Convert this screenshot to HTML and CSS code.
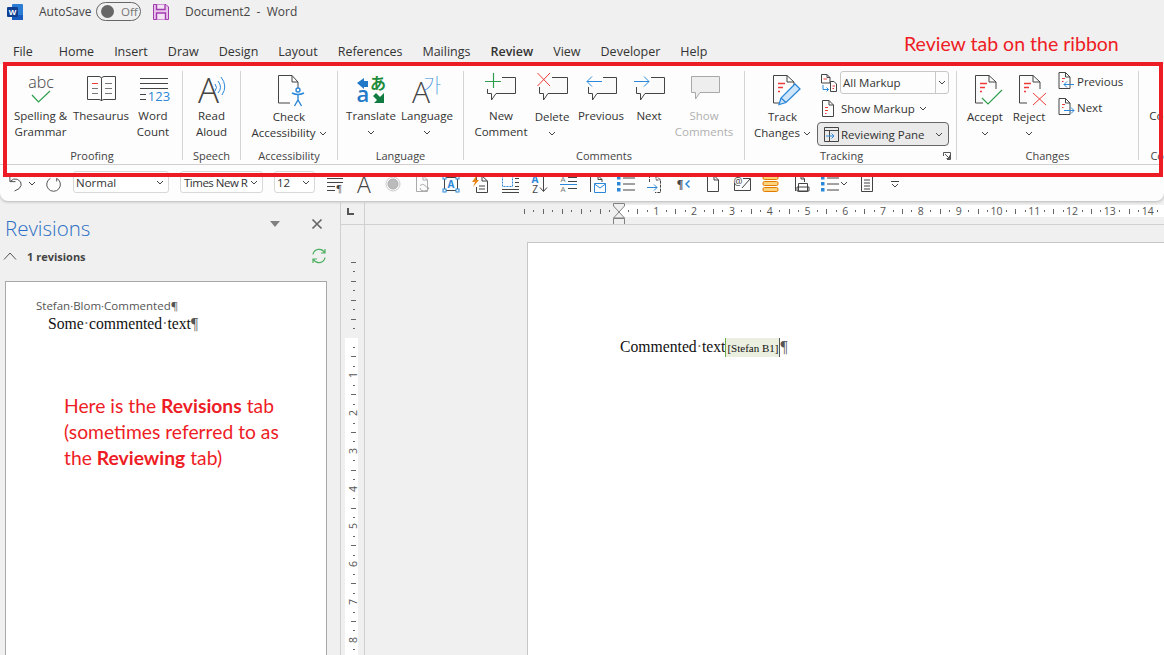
FILE: index.html
```html
<!DOCTYPE html>
<html lang="en">
<head>
  <meta charset="UTF-8" />
  <title>Document2 - Word</title>
  <link rel="stylesheet" href="styles.css">
</head>
<body>

<!-- shared icon parts -->
<svg class="defs">
  <symbol id="chev" viewBox="0 0 8 5"><path d="M1 1l3 3 3-3" fill="none" stroke="#444" stroke-width="1"/></symbol>
  <symbol id="bubble" viewBox="0 0 32 32" overflow="visible"><path d="M2.5 2.5H30.5V18.5H11L6.5 25V18.5H2.5Z"/></symbol>
  <symbol id="sheet" viewBox="0 0 32 32"><path d="M6.5 .5H20L27 7V14M20 .5V7H27M6.5 .5V28H14"/></symbol>
  <symbol id="smalldoc" viewBox="0 0 18 18"><path d="M3.5 .5H10L14.5 5V16.5H3.5ZM10 .5V5H14.5"/></symbol>
</svg>

<header class="titlebar">
  <svg class="word-logo" viewBox="0 0 16 16"><rect x="5" width="11" height="16" rx="1" fill="#2b7cd3"/><rect x="5" y="11" width="11" height="5" fill="#185abd"/><rect y="3" width="11" height="10" rx="1" fill="#103f91"/><text x="5.5" y="11" text-anchor="middle" class="word-w">W</text></svg>
  <span class="autosave">AutoSave</span>
  <div class="toggle"><i class="knob"></i><span>Off</span></div>
  <svg class="save" viewBox="0 0 16 16"><path d="M.5 .5H13L15.5 3V15.5H.5Z" fill="#e9c6ec" stroke="#a33bb0"/><path d="M3.5 .5V5.5H12V.5M3.5 15.5V9H12.5V15.5" fill="#f3e3f4" stroke="#a33bb0" stroke-width="1.4"/></svg>
  <span class="doc-name">Document2&nbsp; - &nbsp;Word</span>
</header>

<nav class="tabs">
  <a class="tab-file">File</a><a>Home</a><a>Insert</a><a>Draw</a><a>Design</a><a>Layout</a><a>References</a><a>Mailings</a><a class="active">Review</a><a>View</a><a>Developer</a><a>Help</a>
</nav>

<section class="ribbon">
  <div class="groups">

    <div class="group g-proofing">
      <div class="btns">
        <div class="btn w61">
          <svg class="ic" viewBox="0 0 32 32"><text x="16" y="13" text-anchor="middle" class="svg-abc">abc</text><path class="green" d="M7 20l6.5 7L25 16"/></svg>
          <span>Spelling &amp;<br>Grammar</span>
        </div>
        <div class="btn w60">
          <svg class="ic" viewBox="0 0 32 32"><path d="M2.5 1.5H14Q16 1.5 16.5 3.5Q17 1.5 19 1.5H30.5V24.5H19Q17 24.5 16.5 26Q16 24.5 14 24.5H2.5ZM16.5 3.5V26"/><path class="red" d="M7 8.5H13"/><path d="M7 13.5H13M7 18.5H13M20 8.5H27M20 13.5H27M20 18.5H27" stroke="#777"/></svg>
          <span>Thesaurus</span>
        </div>
        <div class="btn w44">
          <svg class="ic" viewBox="0 0 32 32"><path d="M3 3.5H31M3 8.5H31M3 13.5H31M3 19.5H9M3 24.5H9"/><text x="22" y="26" text-anchor="middle" class="svg-num">123</text></svg>
          <span>Word<br>Count</span>
        </div>
      </div>
      <div class="label">Proofing</div>
    </div>

    <div class="group g-speech">
      <div class="btns">
        <div class="btn w57">
          <svg class="ic" viewBox="0 0 32 32"><text x="12.5" y="28" text-anchor="middle" class="svg-bigA">A</text><path class="blue" d="M19 9Q22 12.5 19 16M22 6Q27 12.5 22 18M25 2Q32 11 26 20"/></svg>
          <span>Read<br>Aloud</span>
        </div>
      </div>
      <div class="label">Speech</div>
    </div>

    <div class="group g-access">
      <div class="btns">
        <div class="btn w96 low">
          <svg class="ic" viewBox="0 0 32 32"><path d="M5.5 .5H19L25 7V13M19 .5V7H25M5.5 .5V28H17"/><g class="person"><circle cx="25" cy="15" r="2"/><path d="M19 18Q25 21 31 18M25 20V25M21.5 31L25 25L28.5 31"/></g></svg>
          <span>Check<br>Accessibility <svg class="chev"><use href="#chev"/></svg></span>
        </div>
      </div>
      <div class="label">Accessibility</div>
    </div>

    <div class="group g-language">
      <div class="btns">
        <div class="btn w56">
          <svg class="ic" viewBox="0 0 32 32"><path d="M2 8L9 3V6H13V12H9V14Z" fill="#1f78c8" stroke="none"/><text x="23" y="14" text-anchor="middle" class="svg-kana">あ</text><text x="8" y="27" text-anchor="middle" class="svg-a">a</text><path d="M29 18V28H19L22 25L18 21L21 18L25 22Z" fill="#107c41" stroke="none"/></svg>
          <span>Translate<br><svg class="chev"><use href="#chev"/></svg></span>
        </div>
        <div class="btn w56">
          <svg class="ic" viewBox="0 0 32 32"><text x="10" y="28" text-anchor="middle" class="svg-midA">A</text><text x="21" y="18" text-anchor="middle" class="svg-ko">가</text></svg>
          <span>Language<br><svg class="chev"><use href="#chev"/></svg></span>
        </div>
      </div>
      <div class="label">Language</div>
    </div>

    <div class="group g-comments">
      <div class="btns">
        <div class="btn w54">
          <svg class="ic" viewBox="0 0 32 32"><use href="#bubble"/><rect x="-1" y="-3" width="18" height="17" class="mask"/><path class="green" d="M0 6.5H16M8.5 -2V13"/></svg>
          <span>New<br>Comment</span>
        </div>
        <div class="btn w48 low">
          <svg class="ic" viewBox="0 0 32 32"><use href="#bubble" x="1"/><rect x="0" y="-3" width="16" height="15" class="mask"/><path class="red" d="M1.5 -2L14 11M14 -2L1.5 11"/></svg>
          <span>Delete<br><svg class="chev"><use href="#chev"/></svg></span>
        </div>
        <div class="btn w50">
          <svg class="ic" viewBox="0 0 32 32"><use href="#bubble" x="1"/><rect x="0" y="0" width="18" height="12" class="mask"/><path class="blue" d="M17 6.5H2M7 1.5L2 6.5L7 11.5"/></svg>
          <span>Previous</span>
        </div>
        <div class="btn w46">
          <svg class="ic" viewBox="0 0 32 32"><use href="#bubble" x="1"/><rect x="0" y="0" width="18" height="12" class="mask"/><path class="blue" d="M1 6.5H16M11 1.5L16 6.5L11 11.5"/></svg>
          <span>Next</span>
        </div>
        <div class="btn w64 off">
          <svg class="ic ic-off" viewBox="0 0 32 32"><use href="#bubble" x="1" y="-1"/></svg>
          <span>Show<br>Comments</span>
        </div>
      </div>
      <div class="label">Comments</div>
    </div>

    <div class="group g-tracking">
      <div class="btns">
        <div class="btn w71 low">
          <svg class="ic" viewBox="0 0 32 32"><use href="#sheet"/><path class="red dash" d="M11 8.5H18M11 12.5H16M11 16.5H13"/><path class="blue pen" d="M12 29.5L14 23L28 9L33 14L19 27.5ZM14 23L19 27.5" fill="#cfe6fa"/></svg>
          <span>Track<br>Changes <svg class="chev"><use href="#chev"/></svg></span>
        </div>
        <div class="track-col">
          <div class="markup-row">
            <svg class="ic16" viewBox="0 0 18 18"><path d="M1.5 .5H7L10 3.5V9H1.5ZM7 .5V3.5H10M10.5 7.5H14L16.5 10V17.5H10.5Z"/><path class="red" d="M3.5 5H7M12.5 12H15M12.5 14.5H14"/><path class="blue" d="M3 11V15.5H8.5M6.5 13.5L8.5 15.5L6.5 17.5"/></svg>
            <div class="combo"><span>All Markup</span><i class="combo-btn"><svg class="chev"><use href="#chev"/></svg></i></div>
          </div>
          <div class="show-row">
            <svg class="ic16" viewBox="0 0 18 18"><use href="#smalldoc" x="-3"/><path class="red" d="M3 7.5H6M3 10.5H6M3 13.5H4.5"/></svg>
            <span>Show Markup</span> <svg class="chev"><use href="#chev"/></svg>
          </div>
          <div class="pane-row">
            <svg class="ic16" viewBox="0 0 18 18"><path d="M2.5 2.5H16.5V16.5H2.5ZM2.5 5.5H16.5M7.5 5.5V16.5"/><path class="blue" d="M4 11H12M9.5 8.5L12 11L9.5 13.5"/></svg>
            <span>Reviewing Pane</span>
            <svg class="chev"><use href="#chev"/></svg>
          </div>
        </div>
      </div>
      <div class="label">Tracking</div>
      <svg class="launcher" viewBox="0 0 8 8"><path d="M.5 4V.5H7.5V7.5H4M2 2L6.5 6.5M6.5 3.5V6.5H3.5" fill="none" stroke="#555"/></svg>
    </div>

    <div class="group g-changes">
      <div class="btns">
        <div class="btn w44 low">
          <svg class="ic" viewBox="0 0 32 32"><use href="#sheet"/><path class="red dash" d="M11 8.5H18M11 12.5H16M11 16.5H13"/><path class="green" d="M13 23L19 29L33 15"/></svg>
          <span>Accept<br><svg class="chev"><use href="#chev"/></svg></span>
        </div>
        <div class="btn w44 low">
          <svg class="ic" viewBox="0 0 32 32"><use href="#sheet"/><path class="red dash" d="M11 8.5H18M11 12.5H16M11 16.5H13"/><path class="red" d="M20 18L33 30M33 18L20 30"/></svg>
          <span>Reject<br><svg class="chev"><use href="#chev"/></svg></span>
        </div>
        <div class="nav-col">
          <div class="nav-row">
            <svg class="ic16" viewBox="0 0 18 18"><use href="#smalldoc" x="-2.5"/><path class="red" d="M4 6.5H7M4 9.5H5.5"/><path class="blue" d="M16 12.5H6M9 9.5L6 12.5L9 15.5"/></svg>
            <span>Previous</span>
          </div>
          <div class="nav-row">
            <svg class="ic16" viewBox="0 0 18 18"><use href="#smalldoc" x="-2.5"/><path class="red" d="M4 6.5H7M4 9.5H5.5"/><path class="blue" d="M6 12.5H16M13 9.5L16 12.5L13 15.5"/></svg>
            <span>Next</span>
          </div>
        </div>
      </div>
      <div class="label">Changes</div>
    </div>

    <div class="group g-compare">
      <div class="btns">
        <div class="btn w70"><i class="ic"></i><span>Compare</span></div>
      </div>
      <div class="label">Compare</div>
    </div>
  </div>

  <div class="qat">
    <svg class="undo" viewBox="0 0 16 18"><path d="M2 1V7H8M2.5 6.5Q6 3 10 4.5Q15 7 14 11Q13 15 7 17"/></svg>
    <svg class="chev qat-chev"><use href="#chev"/></svg>
    <svg class="redo" viewBox="0 0 18 18"><path d="M12 1.5A7.7 7.7 0 1 1 5 1.5M12 1.5V5"/></svg>
    <div class="qcombo q-style"><span>Normal</span><svg class="chev"><use href="#chev"/></svg></div>
    <div class="qcombo q-font"><span>Times New R</span><svg class="chev"><use href="#chev"/></svg></div>
    <div class="qcombo q-size"><span>12</span><svg class="chev"><use href="#chev"/></svg></div>
    <div class="qicons">
      <svg viewBox="0 0 18 18"><path d="M1 3.5H17M1 7.5H17M1 11.5H9M1 15.5H9"/><text x="13" y="17" text-anchor="middle" class="svg-para">¶</text></svg>
      <svg viewBox="0 0 18 18"><text x="9" y="18" text-anchor="middle" class="svg-qA">A</text></svg>
      <svg viewBox="0 0 18 18"><circle cx="9" cy="9" r="7" stroke="#ccc"/><circle cx="9" cy="9" r="5" fill="#bbb" stroke="#aaa"/></svg>
      <svg viewBox="0 0 18 18"><g stroke="#aaa"><use href="#smalldoc"/><path d="M7 10.5Q10 8 12 10.5T16 13Q15 16 11 16T7 13"/></g></svg>
      <svg viewBox="0 0 18 18"><rect x="2.5" y="2.5" width="13" height="13"/><text x="9" y="13" text-anchor="middle" class="svg-blueA">A</text><g class="handle"><rect x="1" y="1" width="3" height="3"/><rect x="14" y="1" width="3" height="3"/><rect x="1" y="14" width="3" height="3"/><rect x="14" y="14" width="3" height="3"/></g></svg>
      <svg viewBox="0 0 18 18"><path d="M5.5 6V1H11L16.5 6V17.5H5.5V12M11 1V6H16.5M8 11H14M8 14H14"/><path d="M6 0L1 7H4L2 12L8 5H5Z" fill="#e8861a" stroke="none"/></svg>
      <svg viewBox="0 0 18 18"><rect class="blue-dash" x="1.5" y="1.5" width="10" height="10"/><path d="M14 3.5H18M14 7.5H18M14 11.5H18M1 14.5H18M1 17.5H18"/></svg>
      <svg viewBox="0 0 18 18"><text x="5" y="8" text-anchor="middle" class="svg-azA">A</text><text x="5" y="18" text-anchor="middle" class="svg-azZ">Z</text><path d="M13.5 1V16M10 12.5L13.5 16.5L17 12.5"/></svg>
      <svg viewBox="0 0 18 18"><text x="4" y="7" text-anchor="middle" class="svg-smallA">A</text><text x="4" y="17" text-anchor="middle" class="svg-smallA">A</text><path d="M9 2.5H18M9 6.5H18M9 13.5H18"/><path class="blue" d="M1 9.5H18"/></svg>
      <svg viewBox="0 0 18 18"><path d="M2.5 17V.5H10L14 4.5V7M10 .5V4.5H14"/><path class="blue" d="M6.5 8.5H17.5V17.5H6.5ZM6.5 9L12 13L17.5 9"/></svg>
      <svg viewBox="0 0 18 18"><rect class="bullet" x="0" y="1" width="3.5" height="3.5"/><rect class="bullet" x="0" y="7" width="3.5" height="3.5"/><rect class="bullet" x="0" y="13" width="3.5" height="3.5"/><path d="M6 3H18M6 9H18M6 15H18"/></svg>
      <svg viewBox="0 0 18 18"><path d="M3.5 7V.5H10L14.5 5V17.5H9M10 .5V5H14.5" stroke-dasharray="3 1"/><path class="blue" d="M1 12.5H11M8 9.5L11 12.5L8 15.5"/></svg>
      <svg viewBox="0 0 18 18"><text x="5" y="13" text-anchor="middle" class="svg-pil">¶</text><path class="blue" stroke-width="1.5" d="M14.5 5.5L11 9L14.5 12.5"/></svg>
      <svg viewBox="0 0 18 18"><use href="#smalldoc"/></svg>
      <svg viewBox="0 0 18 18"><path d="M1.5 8V15.5H17.5V3.5H10M9 13L17 4"/><text x="5" y="10" text-anchor="middle" class="svg-at">@</text></svg>
      <svg viewBox="0 0 18 18" class="bars"><rect x="1" y="0.5" width="15" height="4" rx="1.5"/><rect x="1" y="6.5" width="15" height="4" rx="1.5"/><rect x="1" y="12.5" width="15" height="4" rx="1.5"/></svg>
      <svg viewBox="0 0 18 18"><path d="M3.5 16V.5H9L12.5 4V7M9 .5V4H12.5M6.5 8.5H15.5V16.5H6.5ZM5 12H17V16H5Z"/></svg>
      <svg viewBox="0 0 18 18"><rect class="bullet" x="0" y="1" width="3.5" height="3.5"/><rect class="bullet" x="0" y="7" width="3.5" height="3.5"/><rect class="bullet" x="0" y="13" width="3.5" height="3.5"/><path d="M6 3H18M6 9H18M6 15H18"/></svg>
    </div>
    <svg class="chev q-list-chev"><use href="#chev"/></svg>
    <svg class="q-lines" viewBox="0 0 14 18"><path d="M1.5 1.5H12.5V16.5H1.5ZM4 5H10M4 8H10M4 11H10M4 14H10"/></svg>
    <svg class="q-more" viewBox="0 0 10 8"><path d="M1 1.5H9M2 4L5 7L8 4"/></svg>
  </div>
</section>

<main class="workspace">
  <aside class="pane">
    <div class="pane-head">
      <h2>Revisions</h2>
      <i class="pane-arrow"></i>
      <svg class="pane-x" viewBox="0 0 12 12"><path d="M1.5 1.5L10.5 10.5M10.5 1.5L1.5 10.5"/></svg>
    </div>
    <div class="pane-count">
      <svg class="pane-up" viewBox="0 0 14 8"><path d="M1 7.5L7 1L13 7.5"/></svg>
      <b>1 revisions</b>
      <svg class="pane-sync" viewBox="0 0 16 16"><path d="M2 6.5A6.2 6.2 0 0 1 13.5 4.5M14 1V5H10M14 9.5A6.2 6.2 0 0 1 2.5 11.5M2 15V11H6"/></svg>
    </div>
    <div class="rev-card">
      <p class="rev-who">Stefan·Blom·Commented¶</p>
      <p class="rev-text">Some<i>·</i>commented<i>·</i>text<u>¶</u></p>
      <p class="note">Here is the <b>Revisions</b> tab<br>(sometimes referred to as<br>the <b>Reviewing</b> tab)</p>
    </div>
  </aside>

  <div class="doc-area">
    <div class="corner"><i></i></div>
    <div class="hruler">
      <div class="htrack">
        <div class="inch"></div><div class="inch"></div><div class="inch"></div>
        <div class="inch num">1</div><div class="inch num">2</div><div class="inch num">3</div><div class="inch num">4</div><div class="inch num">5</div><div class="inch num">6</div><div class="inch num">7</div><div class="inch num">8</div><div class="inch num">9</div><div class="inch num">10</div><div class="inch num">11</div><div class="inch num">12</div><div class="inch num">13</div><div class="inch num">14</div>
        <svg class="indent" viewBox="0 0 12 22"><path d="M.5 .5H11.5V3L6 9L.5 3ZM.5 15L6 9L11.5 15ZM.5 15.5H11.5V21.5H.5Z"/></svg>
      </div>
    </div>
    <div class="vruler">
      <div class="vtrack">
        <div class="vinch first"></div><div class="vinch"></div><div class="vinch"></div>
        <div class="vinch num"><span>1</span></div><div class="vinch num"><span>2</span></div><div class="vinch num"><span>3</span></div><div class="vinch num"><span>4</span></div><div class="vinch num"><span>5</span></div><div class="vinch num"><span>6</span></div><div class="vinch num"><span>7</span></div><div class="vinch num"><span>8</span></div>
      </div>
    </div>
    <div class="canvas">
      <div class="page">
        <p class="doc-text">Commented<i>·</i>text<span class="mark">[Stefan B1]</span><u>¶</u></p>
      </div>
    </div>
  </div>
</main>

<!-- annotations added on top of the screenshot -->
<div class="red-frame"></div>
<div class="ribbon-note">Review tab on the ribbon</div>

</body>
</html>
```

FILE: styles.css
```css
* {
  box-sizing: border-box;
}

html, body {
  margin: 0;
  height: 100%;
}

body {
  position: relative;
  width: 1164px;
  height: 655px;
  overflow: hidden;
  background: #f0f0f0;
  color: #333;
  font-family: "Open Sans", sans-serif;
  font-size: 11.5px;
}

svg {
  display: block;
  overflow: visible;
}

.defs {
  display: none;
}

/* title bar */
.titlebar {
  height: 42px;
  display: flex;
  align-items: flex-start;
  font-size: 12px;
  color: #444;
}

.word-logo {
  width: 16px;
  height: 16px;
  margin: 4px 0 0 7px;
}

.word-w {
  font: bold 8px "Liberation Sans", sans-serif;
  fill: #fff;
}

.autosave {
  margin: 3px 0 0 16px;
  width: 57px;
}

.toggle {
  width: 45px;
  height: 19px;
  margin-top: 2px;
  border: 1px solid #666;
  border-radius: 10px;
  display: flex;
  align-items: center;
  color: #777;
  font-size: 11.5px;
}

.knob {
  width: 13px;
  height: 13px;
  margin: 0 7px 0 4px;
  border-radius: 50%;
  background: #666;
}

.save {
  width: 16px;
  height: 16px;
  margin: 4px 0 0 12px;
}

.doc-name {
  margin: 3px 0 0 16px;
}

/* tabs */
.tabs {
  height: 22px;
  padding: 1px 0 0 13px;
  display: flex;
  gap: 20px;
  font-size: 12.5px;
  line-height: 18px;
  color: #333;
}

.tabs .tab-file {
  margin-right: 6px;
}

.tabs .active {
  font-weight: 600;
}

/* ribbon */
.ribbon {
  height: 137px;
  background: #fdfdfd;
  border-radius: 0 0 8px 8px;
  box-shadow: 0 1px 3px rgba(0,0,0,0.25);
}

.groups {
  height: 101px;
  padding: 7px 0 5px 8px;
  margin-right: 5px;
  display: flex;
  border-bottom: 1px solid #d0d0d0;
}

.group {
  position: relative;
  height: 89px;
  padding-top: 4px;
  display: flex;
  flex-direction: column;
  flex: none;
  border-right: 1px solid #d4d4d4;
}

.g-proofing { width: 175px; padding-left: 2px; }
.g-speech { width: 58px; }
.g-access { width: 97px; }
.g-language { width: 126px; padding-left: 5px; }
.g-comments { width: 281px; padding-left: 10px; }
.g-tracking { width: 212px; padding-left: 2px; }
.g-changes { width: 182px; padding-left: 6px; }
.g-compare { width: 70px; border: none; }

.btns {
  display: flex;
}

.btn {
  flex: none;
  display: flex;
  flex-direction: column;
  align-items: center;
  text-align: center;
  line-height: 16px;
  white-space: nowrap;
}

.btn .chev {
  display: inline-block;
  vertical-align: 1px;
}

.btn > span {
  margin-top: 1px;
}

.btn.low > span {
  margin-top: 2px;
}

.btn.off {
  color: #b0b0b0;
}

.w44 { width: 44px; }
.w46 { width: 46px; }
.w48 { width: 48px; }
.w50 { width: 50px; }
.w54 { width: 54px; }
.w56 { width: 56px; }
.w57 { width: 57px; }
.w60 { width: 60px; }
.w61 { width: 61px; }
.w64 { width: 64px; }
.w70 { width: 70px; }
.w71 { width: 71px; }
.w96 { width: 96px; }

.chev {
  width: 8px;
  height: 5px;
}

.label {
  position: absolute;
  left: 0;
  right: 0;
  top: 77px;
  text-align: center;
  font-size: 11px;
  line-height: 16px;
  color: #444;
  white-space: nowrap;
}

.g-proofing .label { right: 6px; }
.g-tracking .label { right: 18px; }

/* icon strokes */
.ic, .ic16, .qicons svg, .undo, .redo, .q-lines, .q-more {
  fill: none;
  stroke: #444;
  stroke-width: 1;
}

.ic {
  width: 32px;
  height: 32px;
  display: block;
}

.ic use {
  fill: #fafafa;
}

.ic-off {
  stroke: #a8a8a8;
}

.ic-off use {
  fill: #eee;
}

.ic16 {
  width: 18px;
  height: 18px;
  flex: none;
}

.mask {
  fill: #fdfdfd;
  stroke: none;
}

.red { stroke: #ee3a36; }
.dash { stroke-width: 1.3; }
.green { stroke: #2f9e4f; stroke-width: 1.2; }
.blue { stroke: #2b88d8; }
.pen { stroke-width: 1.3; }

.person {
  stroke: #2b88d8;
  stroke-width: 1.4;
}

svg text {
  stroke: none;
  fill: #444;
}

.svg-abc { font: 300 16px "Open Sans", sans-serif; }
.svg-num { font: 13px "Open Sans", sans-serif; fill: #2b88d8; }
.svg-bigA { font: 300 35px "Open Sans", sans-serif; }
.svg-midA { font: 300 30px "Open Sans", sans-serif; }
.svg-kana { font: bold 16px "Noto Sans CJK JP", sans-serif; fill: #1e8c3a; }
.svg-a { font: 600 22px "Open Sans", sans-serif; fill: #1f78c8; }
.svg-ko { font: 100 20px "Noto Sans CJK KR", sans-serif; fill: #2b88d8; }
.svg-para { font: 11px "Liberation Serif", serif; }
.svg-qA { font: 300 23px "Open Sans", sans-serif; }
.svg-blueA { font: bold 10px "Open Sans", sans-serif; fill: #2b88d8; }
.svg-azA { font: bold 10px "Open Sans", sans-serif; fill: #2b88d8; }
.svg-azZ { font: 10px "Open Sans", sans-serif; }
.svg-smallA { font: 8px "Open Sans", sans-serif; fill: #777; }
.svg-pil { font: bold 12px "Liberation Serif", serif; }
.svg-at { font: 10px "Open Sans", sans-serif; }

.handle rect {
  fill: #fff;
  stroke: #2b88d8;
}

.blue-dash {
  stroke: #2b88d8;
  stroke-dasharray: 2 1;
}

.bullet {
  fill: #2b88d8;
  stroke: none;
}

.bars rect {
  fill: #fcd27a;
  stroke: #e07b00;
}

/* tracking group */
.track-col {
  width: 132px;
  margin: -4px 0 0 -1px;
}

.markup-row {
  height: 23px;
  margin-bottom: 3px;
  display: flex;
  align-items: center;
  gap: 2px;
  padding-left: 3px;
}

.combo {
  flex: 1;
  height: 23px;
  display: flex;
  align-items: center;
  justify-content: space-between;
  border: 1px solid #c8c8c8;
  border-radius: 3px;
  padding-left: 2px;
}

.combo-btn {
  width: 13px;
  height: 21px;
  display: flex;
  align-items: center;
  justify-content: center;
  border-left: 1px solid #c8c8c8;
}

.show-row {
  height: 23px;
  margin-bottom: 2px;
  display: flex;
  align-items: center;
  gap: 1px;
  padding-left: 5px;
}

.show-row .chev {
  margin-left: 3px;
}

.pane-row {
  height: 24px;
  padding: 0 5px 0 4px;
  display: flex;
  align-items: center;
  gap: 1px;
  background: #eaeaea;
  border: 1px solid #666;
  border-radius: 4px;
}

.pane-row .chev {
  margin-left: auto;
}

.launcher {
  position: absolute;
  right: 5px;
  bottom: 0;
  width: 8px;
  height: 8px;
}

/* changes group */
.nav-col {
  margin: -7px 0 0 7px;
}

.nav-row {
  height: 26px;
  display: flex;
  align-items: center;
  gap: 1px;
}

/* quick access */
.qat {
  height: 36px;
  padding-top: 10px;
  display: flex;
  align-items: flex-start;
}

.undo {
  width: 15px;
  height: 17px;
  margin-left: 8px;
}

.qat-chev {
  margin: 6px 0 0 5px;
}

.redo {
  width: 16px;
  height: 16px;
  margin: 2px 0 0 10px;
}

.qcombo {
  height: 22px;
  margin: -4px 0 0 11px;
  display: flex;
  align-items: center;
  justify-content: space-between;
  padding: 0 4px 0 2px;
  background: #fff;
  border: 1px solid #d8d8d8;
  border-radius: 3px;
  font-size: 11.5px;
}

.q-style { width: 96px; }
.q-font { width: 83px; padding-left: 3px; white-space: nowrap; overflow: hidden; letter-spacing: -0.5px; }
.q-size { width: 41px; }

.qicons {
  display: flex;
  gap: 11.1px;
  margin-left: 11px;
}

.qicons svg {
  width: 18px;
  height: 18px;
  flex: none;
}

.q-list-chev {
  margin: 6px 0 0 1px;
}

.q-lines {
  width: 14px;
  height: 18px;
  margin-left: 12px;
}

.q-more {
  width: 10px;
  height: 8px;
  margin: 5px 0 0 16px;
}

/* workspace */
.workspace {
  height: 454px;
  display: flex;
}

.pane {
  width: 341px;
  flex: none;
  border-right: 1px solid #d0d0d0;
  padding-left: 5px;
}

.pane-head {
  height: 46px;
  padding-top: 7px;
  display: flex;
  align-items: center;
}

.pane-head h2 {
  margin: 0;
  font-size: 20.5px;
  font-weight: 300;
  color: #2b6fc4;
}

.pane-arrow {
  width: 0;
  height: 0;
  margin-left: auto;
  margin-bottom: 8px;
  border: 5px solid transparent;
  border-top: 6px solid #808080;
  border-bottom: none;
}

.pane-x {
  width: 12px;
  height: 12px;
  margin: 0 17px 8px 31px;
  fill: none;
  stroke: #666;
  stroke-width: 1.7;
}

.pane-count {
  height: 20px;
  margin: -1px 0 0 -2px;
  display: flex;
  align-items: center;
  font-size: 11.5px;
  color: #444;
}

.pane-up {
  width: 14px;
  height: 8px;
  fill: none;
  stroke: #555;
}

.pane-count b {
  margin-left: 10px;
  font-weight: 700;
  font-size: 11px;
}

.pane-sync {
  width: 16px;
  height: 16px;
  margin-left: auto;
  margin-right: 13px;
  fill: none;
  stroke: #4caf5f;
  stroke-width: 1.2;
}

.rev-card {
  width: 322px;
  height: 380px;
  margin-top: 15px;
  padding: 16px 0 0 30px;
  background: #fff;
  border: 1px solid #a8a8a8;
}

.rev-who {
  margin: 0;
  font-size: 11.5px;
  line-height: 16px;
  color: #555;
}

.rev-text {
  margin: 1px 0 0 12px;
  font: 15.7px/18px "Liberation Serif", serif;
  color: #111;
}

.rev-text i, .doc-text i {
  font-style: normal;
  color: #777;
}

.rev-text u, .doc-text u {
  text-decoration: none;
  color: #555;
}

.note {
  margin: 60px 0 0 28px;
  font: 19.3px/26px Lato, sans-serif;
  color: #ee1c25;
}

/* document */
.doc-area {
  flex: 1;
  min-width: 0;
  display: grid;
  grid-template-columns: 24px 1fr;
  grid-template-rows: 24px 1fr;
}

.corner {
  border-right: 1px solid #d0d0d0;
  border-bottom: 1px solid #d0d0d0;
  position: relative;
}

.corner i {
  position: absolute;
  left: 6px;
  top: 7px;
  width: 7px;
  height: 7px;
  border-left: 2px solid #555;
  border-bottom: 2px solid #555;
}

.hruler {
  border-bottom: 1px solid #d0d0d0;
  padding: 4px 0 0 159px;
  overflow: hidden;
}

.htrack {
  position: relative;
  height: 12px;
  display: flex;
  background: linear-gradient(90deg, transparent 95px, #fff 95px);
}

.inch {
  flex: none;
  width: 37.8px;
  height: 12px;
  text-align: center;
  font-size: 10.5px;
  line-height: 12px;
  color: #555;
  background:
    linear-gradient(#666, #666) 0 50% / 1px 5px no-repeat,
    linear-gradient(#666, #666) 9.45px 50% / 1px 2px no-repeat,
    linear-gradient(#666, #666) 18.9px 50% / 1px 5px no-repeat,
    linear-gradient(#666, #666) 28.35px 50% / 1px 2px no-repeat;
}

.inch.num {
  background:
    linear-gradient(#666, #666) 0 50% / 1px 5px no-repeat,
    linear-gradient(#666, #666) 9.45px 50% / 1px 2px no-repeat,
    linear-gradient(#666, #666) 28.35px 50% / 1px 2px no-repeat;
}

.indent {
  position: absolute;
  left: 89px;
  top: -2px;
  width: 12px;
  height: 22px;
  fill: #f0f0f0;
  stroke: #808080;
}

.vruler {
  border-right: 1px solid #d0d0d0;
  padding: 18px 0 0 4px;
  overflow: hidden;
}

.vtrack {
  width: 13px;
  background: linear-gradient(transparent 95px, #fff 95px);
}

.vinch {
  height: 37.8px;
  display: flex;
  align-items: center;
  justify-content: center;
  font-size: 10.5px;
  color: #555;
  background:
    linear-gradient(#666, #666) 6px 0 / 5px 1px no-repeat,
    linear-gradient(#666, #666) 8px 9.45px / 2px 1px no-repeat,
    linear-gradient(#666, #666) 8px 28.35px / 2px 1px no-repeat;
}

.vinch.first {
  background:
    linear-gradient(#666, #666) 6px 18.9px / 5px 1px no-repeat,
    linear-gradient(#666, #666) 8px 28.35px / 2px 1px no-repeat;
}

.vinch:nth-child(2) {
  background:
    linear-gradient(#666, #666) 6px 0 / 5px 1px no-repeat,
    linear-gradient(#666, #666) 8px 9.45px / 2px 1px no-repeat,
    linear-gradient(#666, #666) 6px 18.9px / 5px 1px no-repeat,
    linear-gradient(#666, #666) 8px 28.35px / 2px 1px no-repeat;
}

.vinch span {
  writing-mode: vertical-rl;
  transform: rotate(180deg);
  margin-left: 3px;
}

.canvas {
  padding: 17px 0 0 162px;
  overflow: hidden;
}

.page {
  height: 500px;
  padding: 92px 0 0 92px;
  background: #fff;
  border-left: 1px solid #c6c6c6;
  border-top: 1px solid #c6c6c6;
}

.doc-text {
  margin: 0;
  font: 15.7px/24px "Liberation Serif", serif;
  color: #111;
  display: flex;
  align-items: center;
  white-space: pre;
}

.mark {
  height: 19px;
  padding: 0 1px;
  font-size: 11px;
  line-height: 21px;
  background: #ebefe0;
  border-left: 1px solid #70ad47;
  border-right: 1px solid #555;
}

/* annotations */
.red-frame {
  position: absolute;
  left: 3px;
  top: 62px;
  width: 1160px;
  height: 115px;
  border: 4px solid #ed1c24;
}

.ribbon-note {
  position: absolute;
  left: 904px;
  top: 32px;
  font: 19.5px/24px Lato, sans-serif;
  color: #ee1c25;
}
```
